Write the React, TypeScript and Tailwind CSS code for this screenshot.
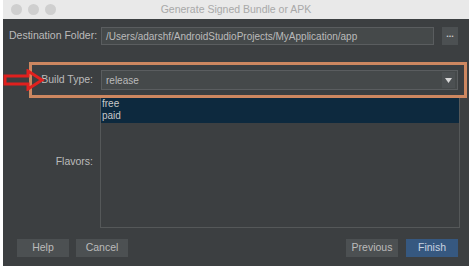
import { ReactNode } from "react";

const font = { fontFamily: '"Liberation Sans", Arial, sans-serif' };

function Label({ children }: { children: ReactNode }) {
  return (
    <div className="w-[85px] shrink-0 whitespace-nowrap pr-[1px] text-right text-[10.5px] text-[#bbbbbb]">
      {children}
    </div>
  );
}

function Btn({ children, primary }: { children: ReactNode; primary?: boolean }) {
  return (
    <div
      className={
        "flex h-[18px] w-[52px] items-center justify-center text-[10.5px] " +
        (primary ? "bg-[#365880] text-[#c9d4e0]" : "bg-[#4c5052] text-[#bbbbbb]")
      }
    >
      {children}
    </div>
  );
}

export default function App() {
  return (
    <div className="relative h-[270px] w-[474px] overflow-hidden bg-white" style={font}>
      <div className="ml-[3px] flex h-[266px] w-[466px] flex-col">
        <div className="relative flex h-[19px] shrink-0 items-center bg-[#e9e9e9] pl-[8px]">
          <div className="flex gap-[6px]">
            <span className="h-[11px] w-[11px] rounded-full bg-[#cfcfcf]" />
            <span className="h-[11px] w-[11px] rounded-full bg-[#cfcfcf]" />
            <span className="h-[11px] w-[11px] rounded-full bg-[#cfcfcf]" />
          </div>
          <div className="absolute inset-0 flex items-center justify-center text-[10.5px] text-[#a8a8a8]">
            Generate Signed Bundle or APK
          </div>
        </div>

        <div className="flex flex-1 flex-col bg-[#3c3f41] pl-[6px] pr-[11px]">
          <div className="mt-[8px] flex h-[18px] items-center">
            <Label>Destination Folder:</Label>
            <div className="ml-[7px] flex h-full flex-1 items-center border border-[#5a5d5f] bg-[#45494a] pl-[4px] text-[10px] text-[#bbbbbb]">
              /Users/adarshf/AndroidStudioProjects/MyApplication/app
            </div>
            <div className="ml-[8px] flex h-full w-[16px] items-center justify-center bg-[#4c5052] pb-[3px] text-[9px] font-bold text-[#cccccc]">
              ...
            </div>
          </div>

          <div className="mt-[25px] flex h-[20px] items-center">
            <Label>Build Type:</Label>
            <div className="ml-[7px] flex h-full flex-1 items-center justify-between border border-[#5a5d5f] bg-[#45494a] pl-[4px] text-[10px] text-[#bbbbbb]">
              <span>release</span>
              <span className="mr-[2px] flex h-[16px] w-[13px] items-center justify-center bg-[#4c5052]">
                <svg width="7" height="5" viewBox="0 0 7 5">
                  <path d="M0 0 H7 L3.5 5 Z" fill="#d8d8d8" />
                </svg>
              </span>
            </div>
          </div>

          <div className="mt-[6px] flex h-[132px] items-center">
            <Label>Flavors:</Label>
            <div className="ml-[6px] mr-[-2px] h-full flex-1 border border-[#555859] bg-[#3c3f41]">
              <div className="bg-[#0d293e] pl-[1px] text-[10px] leading-[12px] text-[#c8c8c8]">
                <div className="pt-[1px]">free</div>
                <div className="pb-[1px]">paid</div>
              </div>
            </div>
          </div>

          <div className="mt-[11px] flex items-center">
            <div className="ml-[8px] flex gap-[7px]">
              <Btn>Help</Btn>
              <Btn>Cancel</Btn>
            </div>
            <div className="ml-auto flex gap-[8px]">
              <Btn>Previous</Btn>
              <Btn primary>Finish</Btn>
            </div>
          </div>
        </div>
      </div>

      {/* annotation overlays */}
      <div className="absolute left-[29px] top-[62px] h-[36px] w-[438px] border-[3px] border-[#cd8760]" />
      <svg className="absolute left-[3px] top-[69px]" width="42" height="22" viewBox="0 0 42 22">
        <path
          d="M2 7 H25 V2 L39 11 L25 20 V15 H2 Z"
          fill="none"
          stroke="#e0201e"
          strokeWidth="3"
          strokeLinejoin="miter"
        />
      </svg>
    </div>
  );
}
